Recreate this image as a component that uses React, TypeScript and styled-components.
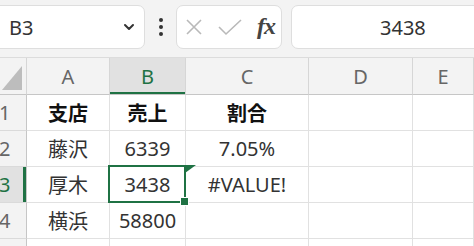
import React from 'react';
import styled, { createGlobalStyle, css } from 'styled-components';
import { ChevronDown } from 'lucide-react';

const GlobalStyle = createGlobalStyle`
  html, body {
    margin: 0;
    padding: 0;
    background: #ffffff;
    overflow: hidden;
  }
  body {
    font-family: "Noto Sans", "Noto Sans CJK JP", sans-serif;
    color: #262626;
  }
`;

const GREEN = '#1f7244';

const Sheet = styled.div`
  width: 474px;
  height: 246px;
  overflow: hidden;
  display: flex;
  flex-direction: column;
`;

const Toolbar = styled.div`
  height: 58px;
  flex: none;
  display: flex;
  align-items: flex-start;
  padding-top: 5px;
  box-sizing: border-box;
  background: #f3f3f3;
  border-bottom: 1px solid #dcdcdc;
`;

const Box = styled.div`
  height: 44px;
  box-sizing: border-box;
  background: #ffffff;
  border: 1px solid #dedede;
  border-radius: 7px;
  display: flex;
  align-items: center;
`;

const NameBox = styled(Box)`
  width: 156px;
  margin-left: -11px;
  padding: 0 7px 0 19px;
  justify-content: space-between;
  font-size: 20px;
  color: #333;
`;

const Dots = styled.div`
  width: 31px;
  height: 44px;
  display: flex;
  align-items: center;
  justify-content: center;
`;

const FormulaButtons = styled(Box)`
  width: 106px;
  padding: 0 6px 0 8px;
  justify-content: space-between;
`;

const Fx = styled.span`
  font-family: "Liberation Serif", serif;
  font-style: italic;
  font-weight: bold;
  font-size: 24px;
  color: #444;
  letter-spacing: -1px;
  margin-top: -2px;
`;

const FormulaInput = styled(Box)`
  flex: 1;
  margin-left: 9px;
  margin-right: -12px;
  padding-left: 88px;
  font-size: 20px;
  color: #333;
`;

const Grid = styled.div`
  display: grid;
  grid-template-columns: 27px 83px 76px 123px 104px 1fr;
  grid-template-rows: 37px;
  grid-auto-rows: 36px;
`;

const HeaderCell = styled.div<{ $active?: boolean }>`
  position: relative;
  box-sizing: border-box;
  background: #f3f3f3;
  border-right: 1px solid #d6d6d6;
  border-bottom: 1px solid #c6c6c6;
  display: flex;
  align-items: center;
  justify-content: center;
  font-size: 20px;
  color: #666;
  ${(p) =>
    p.$active &&
    css`
      background: #e1e1e1;
      color: ${GREEN};
      box-shadow: inset 0 -2px 0 ${GREEN};
    `}
`;

const Corner = styled.svg`
  position: absolute;
  left: 2px;
  bottom: 4px;
`;

const RowHead = styled.div<{ $active?: boolean }>`
  box-sizing: border-box;
  background: #f3f3f3;
  border-right: 1px solid #c6c6c6;
  border-bottom: 1px solid #dadada;
  display: flex;
  align-items: center;
  font-size: 20px;
  color: #666;
  margin-left: -1px;
  ${(p) =>
    p.$active &&
    css`
      background: #e1e1e1;
      color: ${GREEN};
      box-shadow: inset -3px 0 0 ${GREEN};
    `}
`;

const Cell = styled.div<{ $bold?: boolean }>`
  position: relative;
  box-sizing: border-box;
  border-right: 1px solid #e1e1e1;
  border-bottom: 1px solid #e1e1e1;
  display: flex;
  align-items: center;
  justify-content: center;
  font-size: 20px;
  color: #333;
  font-weight: ${(p) => (p.$bold ? 700 : 400)};
  ${(p) => p.$bold && css`color: #111;`}
`;

const Selection = styled.div`
  position: absolute;
  left: -2px;
  top: -2px;
  right: -1px;
  bottom: -1px;
  border: 2px solid ${GREEN};
  pointer-events: none;
  z-index: 2;
`;

const Handle = styled.div`
  position: absolute;
  right: -5px;
  bottom: -5px;
  width: 7px;
  height: 7px;
  background: ${GREEN};
  border: 1px solid #fff;
`;

const Flag = styled.svg`
  position: absolute;
  right: -12px;
  top: -2px;
  z-index: 3;
`;

const columns = ['A', 'B', 'C', 'D', 'E'];

const rows: string[][] = [
  ['支店', '売上', '割合', '', ''],
  ['藤沢', '6339', '7.05%', '', ''],
  ['厚木', '3438', '#VALUE!', '', ''],
  ['横浜', '58800', '', '', ''],
  ['', '', '', '', ''],
];

export default function App(): JSX.Element {
  return (
    <Sheet>
      <GlobalStyle />
      <Toolbar>
        <NameBox>
          <span>B3</span>
          <ChevronDown size={16} strokeWidth={3} color="#333" />
        </NameBox>
        <Dots>
          <svg width="6" height="20" viewBox="0 0 6 20">
            <circle cx="3" cy="3" r="2" fill="#333" />
            <circle cx="3" cy="10" r="2" fill="#333" />
            <circle cx="3" cy="17" r="2" fill="#333" />
          </svg>
        </Dots>
        <FormulaButtons>
          <svg width="18" height="18" viewBox="0 0 18 18">
            <path d="M2 2 L16 16 M16 2 L2 16" stroke="#b9b9b9" strokeWidth="1.6" fill="none" />
          </svg>
          <svg width="24" height="18" viewBox="0 0 24 18">
            <path d="M1 9 L8 16 L23 2" stroke="#b9b9b9" strokeWidth="1.6" fill="none" />
          </svg>
          <Fx>fx</Fx>
        </FormulaButtons>
        <FormulaInput>3438</FormulaInput>
      </Toolbar>
      <Grid>
        <HeaderCell>
          <Corner width="20" height="24" viewBox="0 0 20 24">
            <polygon points="20,0 20,24 0,24" fill="#bdbdbd" />
          </Corner>
        </HeaderCell>
        {columns.map((c) => (
          <HeaderCell key={c} $active={c === 'B'}>
            {c}
          </HeaderCell>
        ))}
        {rows.map((r, i) => (
          <React.Fragment key={i}>
            {/* the last row is only a sliver at the bottom edge, its number is not visible */}
            <RowHead $active={i === 2}>{i < 4 ? i + 1 : ''}</RowHead>
            {r.map((v, j) => {
              const selected = i === 2 && j === 1;
              return (
                <Cell key={j} $bold={i === 0}>
                  {v}
                  {selected && (
                    <Selection>
                      <Handle />
                      <Flag width="11" height="8" viewBox="0 0 11 8">
                        <polygon points="0,0 11,0 0,8" fill={GREEN} />
                      </Flag>
                    </Selection>
                  )}
                </Cell>
              );
            })}
          </React.Fragment>
        ))}
      </Grid>
    </Sheet>
  );
}
